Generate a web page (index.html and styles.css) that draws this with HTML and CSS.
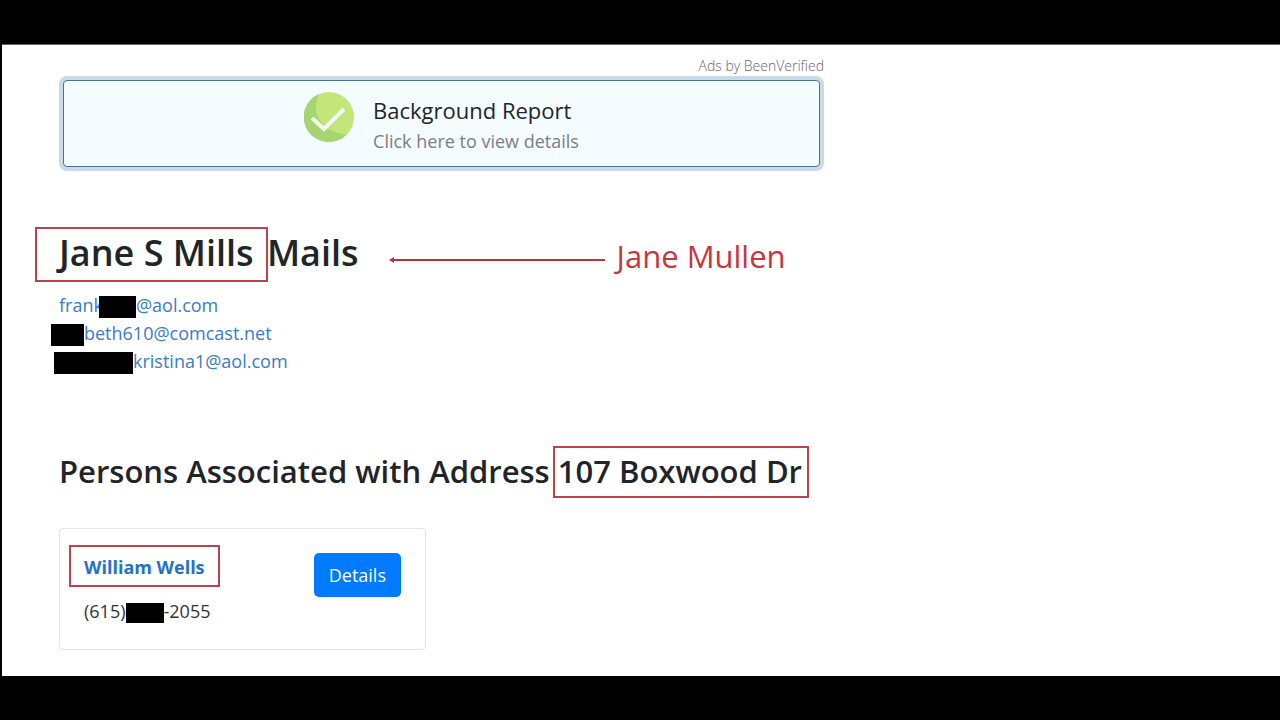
FILE: index.html
```html
<!DOCTYPE html>
<html lang="en">
<head>
    <meta charset="UTF-8">
    <meta name="viewport" content="width=device-width, initial-scale=1.0">
    <title>Jane S Mills Mails</title>
    <link rel="stylesheet" href="styles.css">
</head>
<body>
    <main class="page">
        <div class="content">
            <div class="ad-label">Ads by BeenVerified</div>
            <a class="report" href="#">
                <svg class="report-icon" viewBox="0 0 50 50" aria-hidden="true">
                    <circle cx="25" cy="25" r="25" fill="#c3e678"/>
                    <path d="M15 2A25 25 0 1 0 43 42C24 43 4 25 15 2Z" fill="#a4d56f"/>
                    <path d="M8 26L20 37L40 17" fill="none" stroke="#f6fdf0" stroke-width="4"/>
                </svg>
                <span class="report-text">
                    <span class="report-title">Background Report</span>
                    <span class="report-sub">Click here to view details</span>
                </span>
            </a>

            <div class="mails-head">
                <h1 class="title"><span class="mark mark-name">Jane S Mills</span> Mails</h1>
                <div class="note">
                    <svg class="arrow" viewBox="0 0 216 8" aria-hidden="true">
                        <path d="M4 4H216" stroke="#b5363c" stroke-width="2"/>
                        <path d="M0 4L5 1V7Z" fill="#b5363c"/>
                    </svg>
                    <span>Jane Mullen</span>
                </div>
            </div>
            <ul class="mails">
                <li><a href="#">frank<span class="hidden w-mid"></span>@aol.com</a></li>
                <li><a href="#"><span class="hidden w-short"></span>beth610@comcast.net</a></li>
                <li><a href="#"><span class="hidden w-long"></span>kristina1@aol.com</a></li>
            </ul>

            <h2 class="subtitle">Persons Associated with Address <span class="mark mark-address">107 Boxwood Dr</span></h2>
            <div class="card">
                <div class="person">
                    <a class="person-name mark mark-person" href="#">William Wells</a>
                    <div class="phone">(615)<span class="hidden w-phone"></span>-2055</div>
                </div>
                <button class="btn" type="button">Details</button>
            </div>
        </div>
    </main>
</body>
</html>
```

FILE: styles.css
```css
* {
    box-sizing: border-box;
}
body {
    margin: 0;
    min-height: 100vh;
    display: flex;
    flex-direction: column;
    padding: 44px 0 44px 2px;
    background-color: #000;
    color: #212529;
    font-family: "Open Sans", "Noto Sans", sans-serif;
    font-size: 18px;
    line-height: 28px;
}
a {
    color: #3a7cc9;
    text-decoration: none;
}
.page {
    flex: 1;
    background-color: #fff;
    border-top: 1px solid #666;
    padding: 11px 57px 24px;
}
.content {
    max-width: 765px;
}
.ad-label {
    text-align: right;
    font-size: 14px;
    font-weight: 300;
    line-height: 20px;
    color: #666;
}
.report {
    display: flex;
    justify-content: center;
    gap: 19px;
    margin: 4px;
    height: 87px;
    padding: 11px 0;
    background-color: #f5fcff;
    border: 1px solid #4a7394;
    border-radius: 4px;
    box-shadow: 0 0 0 4px #c9dbe7;
}
.report-icon {
    width: 50px;
    height: 50px;
}
.report-text {
    display: flex;
    flex-direction: column;
}
.report-title {
    font-size: 22px;
    line-height: 36px;
    color: #212529;
}
.report-sub {
    line-height: 26px;
    color: #7a8085;
}
.mails-head {
    display: flex;
    align-items: flex-start;
    gap: 30px;
    margin-top: 58px;
}
.title {
    margin: 0;
    font-size: 36px;
    font-weight: 600;
    line-height: 56px;
}
.note {
    display: flex;
    align-items: center;
    gap: 12px;
    font-size: 31px;
    line-height: 62px;
    color: #c9353c;
}
.arrow {
    width: 216px;
    height: 8px;
    margin-top: 8px;
}

/* red frames drawn round the marked words */
.mark {
    position: relative;
}
.mark::after {
    content: "";
    position: absolute;
    border: 2px solid #b8454a;
}
.mark-name {
    padding-right: 4px;
}
.mark-name::after {
    inset: -1px -10px -5px -24px;
}
.mark-address::after {
    inset: -4px -7px -6px -5px;
}
.mark-person::after {
    inset: -8px -15px -6px -15px;
}

.mails {
    list-style: none;
    margin: 4px 0 0;
    padding: 0;
}
.hidden {
    display: inline-block;
    height: 22px;
    vertical-align: middle;
    background-color: #000;
}
.w-mid {
    width: 37px;
    margin-left: -4px;
}
.w-short {
    width: 33px;
    margin-left: -8px;
}
.w-long {
    width: 79px;
    margin-left: -5px;
}
.w-phone {
    width: 38px;
    height: 20px;
}
.subtitle {
    margin: 71px 0 32px;
    font-size: 31px;
    font-weight: 600;
    line-height: 50px;
}
.card {
    display: flex;
    justify-content: space-between;
    align-items: flex-start;
    max-width: 367px;
    padding: 24px;
    border: 1px solid #e2e4e6;
    border-radius: 4px;
}
.person-name {
    display: inline-block;
    font-weight: 700;
    color: #2472c8;
}
.phone {
    margin-top: 16px;
    color: #333;
}
.btn {
    padding: 8px 15px;
    border: 0;
    border-radius: 5px;
    background-color: #007bff;
    color: #fff;
    font: inherit;
}
```
